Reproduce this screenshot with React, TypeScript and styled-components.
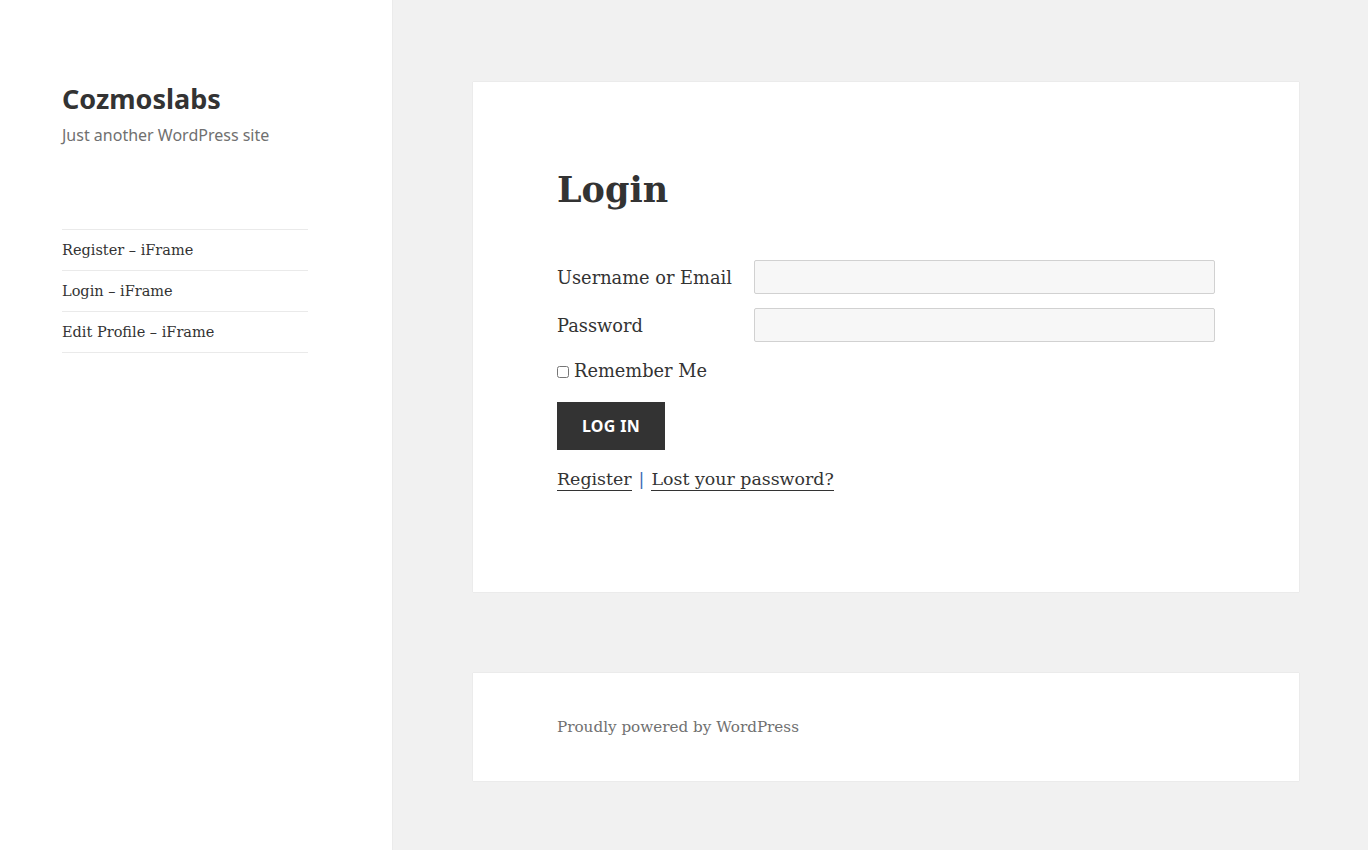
import React from 'react';
import styled, { createGlobalStyle } from 'styled-components';

const GlobalStyle = createGlobalStyle`
  html, body {
    margin: 0;
    padding: 0;
  }
  body {
    background: #f1f1f1;
    color: #333;
    font-family: "DejaVu Serif", "Liberation Serif", serif;
  }
  * {
    box-sizing: border-box;
  }
`;

const Page = styled.div`
  display: flex;
  min-height: 850px;
`;

const Sidebar = styled.aside`
  width: 392px;
  flex-shrink: 0;
  background: #fff;
  box-shadow: 0 0 1px rgba(0, 0, 0, 0.15);
  padding: 82px 84px 0 62px;
`;

const SiteTitle = styled.h1`
  margin: 0;
  font-family: "Noto Sans", sans-serif;
  font-weight: 700;
  font-size: 27px;
  line-height: 34px;
  color: #333;
`;

const Tagline = styled.p`
  margin: 7px 0 0;
  font-family: "Noto Sans", sans-serif;
  font-size: 16px;
  line-height: 24px;
  color: #707070;
`;

const Menu = styled.ul`
  list-style: none;
  margin: 82px 0 0;
  padding: 0;
  border-top: 1px solid #eaeaea;
`;

const MenuItem = styled.li`
  border-bottom: 1px solid #eaeaea;
  height: 41px;
  display: flex;
  align-items: center;
  font-size: 14.5px;
  color: #333;
`;

const Main = styled.main`
  flex: 1;
  padding: 82px 68px 40px 81px;
  display: flex;
  flex-direction: column;
  gap: 81px;
`;

const Card = styled.article`
  width: 826px;
  background: #fff;
  box-shadow: 0 0 1px rgba(0, 0, 0, 0.15);
  padding: 84px 84px 99px;
`;

const Title = styled.h2`
  margin: 0 0 46px;
  font-size: 35px;
  font-weight: 700;
  line-height: 48px;
  color: #333;
`;

const Row = styled.div`
  display: flex;
  align-items: center;
  margin-bottom: 14px;
`;

const Label = styled.label`
  width: 30%;
  font-size: 17.8px;
  color: #333;
`;

const Input = styled.input`
  width: 70%;
  height: 34px;
  background: #f7f7f7;
  border: 1px solid #d1d1d1;
  border-radius: 2px;
  padding: 0 8px;
  font: inherit;
`;

const CheckRow = styled.label`
  display: flex;
  align-items: center;
  gap: 5px;
  font-size: 17.8px;
  margin-top: 18px;
  color: #333;
`;

const Check = styled.input`
  width: 12px;
  height: 12px;
  margin: 2px 0 0;
`;

const Button = styled.button`
  margin-top: 21px;
  height: 48px;
  width: 108px;
  background: #333;
  color: #fff;
  border: none;
  font-family: "Noto Sans", sans-serif;
  font-weight: 700;
  font-size: 16px;
  letter-spacing: 0.02em;
  text-transform: uppercase;
  padding: 0;
`;

const Links = styled.p`
  margin: 15px 0 0;
  font-size: 17.4px;
  line-height: 28px;
  display: flex;
  align-items: center;
  gap: 7px;
`;

const Link = styled.a`
  color: #333;
  text-decoration: none;
  border-bottom: 1px solid #333;
  line-height: 22px;
`;

const Sep = styled.span`
  color: #3b6db5;
`;

const Footer = styled.footer`
  width: 826px;
  height: 108px;
  background: #fff;
  box-shadow: 0 0 1px rgba(0, 0, 0, 0.15);
  padding: 0 84px;
  display: flex;
  align-items: center;
  font-size: 15.2px;
  color: #707070;
`;

export default function App() {
  return (
    <>
      <GlobalStyle />
      <Page>
        <Sidebar>
          <SiteTitle>Cozmoslabs</SiteTitle>
          <Tagline>Just another WordPress site</Tagline>
          <Menu>
            <MenuItem>Register – iFrame</MenuItem>
            <MenuItem>Login – iFrame</MenuItem>
            <MenuItem>Edit Profile – iFrame</MenuItem>
          </Menu>
        </Sidebar>
        <Main>
          <Card>
            <Title>Login</Title>
            <Row>
              <Label>Username or Email</Label>
              <Input type="text" />
            </Row>
            <Row>
              <Label>Password</Label>
              <Input type="password" />
            </Row>
            <CheckRow>
              <Check type="checkbox" />
              Remember Me
            </CheckRow>
            <Button>Log In</Button>
            <Links>
              <Link href="#">Register</Link>
              <Sep>|</Sep>
              <Link href="#">Lost your password?</Link>
            </Links>
          </Card>
          <Footer>Proudly powered by WordPress</Footer>
        </Main>
      </Page>
    </>
  );
}
